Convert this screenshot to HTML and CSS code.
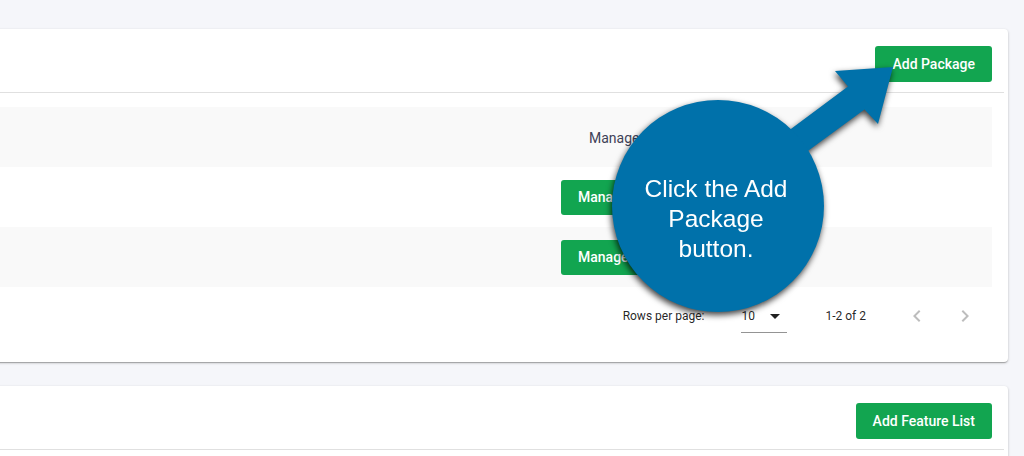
FILE: index.html
```html
<!DOCTYPE html>
<html lang="en">
<head>
<meta charset="utf-8">
<title>Packages</title>
<link rel="stylesheet" href="styles.css">
</head>
<body>
<main class="page">
  <section class="card">
    <div class="card-header">
      <button class="btn">Add Package</button>
    </div>
    <div class="divider"></div>
    <div class="table-wrap">
      <div class="row row-head">
        <div class="cell"></div>
        <div class="cell"><span class="head-label">Manage</span></div>
      </div>
      <div class="row">
        <div class="cell"></div>
        <div class="cell"><button class="btn btn-row">Manage Features</button></div>
      </div>
      <div class="row row-alt">
        <div class="cell"></div>
        <div class="cell"><button class="btn btn-row">Manage Features</button></div>
      </div>
    </div>
    <div class="pagination">
      <span class="rows-label">Rows per page:</span>
      <div class="select"><span>10</span><span class="caret"></span></div>
      <span class="range">1-2 of 2</span>
      <button class="icon-btn" aria-label="Previous page">
        <svg width="24" height="24" viewBox="0 0 24 24"><path d="M15.41 7.41 14 6l-6 6 6 6 1.41-1.41L10.83 12z" fill="#bdbdbd"/></svg>
      </button>
      <button class="icon-btn" aria-label="Next page">
        <svg width="24" height="24" viewBox="0 0 24 24"><path d="M10 6 8.59 7.41 13.17 12l-4.58 4.59L10 18l6-6z" fill="#bdbdbd"/></svg>
      </button>
    </div>
  </section>

  <section class="card">
    <div class="card-header">
      <button class="btn">Add Feature List</button>
    </div>
    <div class="divider"></div>
    <div class="card-body"></div>
  </section>
</main>

<div class="callout">
  <svg class="arrow" width="1024" height="456" viewBox="0 0 1024 456">
    <polygon points="893,67 835,71 848,86.5 760,152 760,186 864.5,109.5 878,124" fill="#0071aa"/>
  </svg>
  <div class="bubble">
    <span>Click the Add</span>
    <span>Package</span>
    <span>button.</span>
  </div>
</div>
</body>
</html>
```

FILE: styles.css
```css
html, body {
  margin: 0;
  padding: 0;
  overflow: hidden;
}

body {
  background: #f5f6fa;
  font-family: Roboto, "Liberation Sans", Arial, sans-serif;
  color: rgba(0, 0, 0, 0.87);
  position: relative;
  width: 1024px;
  height: 456px;
}

.page {
  padding: 29px 16px 0 0;
  margin-left: -10px;
}

.card {
  background: #ffffff;
  border-radius: 4px;
  box-shadow: 0 1px 3px rgba(0, 0, 0, 0.2), 0 1px 1px rgba(0, 0, 0, 0.14), 0 2px 1px -1px rgba(0, 0, 0, 0.12);
  margin-bottom: 24px;
}

.card-header {
  display: flex;
  justify-content: flex-end;
  padding: 17px 16px 10px;
}

.divider {
  height: 1px;
  background: #e0e0e0;
  margin-right: 4px;
}

.btn {
  height: 36px;
  padding: 0 17px;
  border: none;
  border-radius: 3px;
  background: #12a550;
  color: #ffffff;
  font-family: Roboto, "Liberation Sans", Arial, sans-serif;
  font-size: 14px;
  font-weight: 500;
  line-height: 36px;
  white-space: nowrap;
}

.table-wrap {
  padding: 14px 16px 0 0;
}

.row {
  display: grid;
  grid-template-columns: 1fr 431px;
  height: 60px;
  align-items: center;
}

.row-head,
.row-alt {
  background: #f9f9f9;
}

.head-label {
  margin-left: 28px;
  font-size: 14px;
  color: #3e4157;
}

.btn-row {
  height: 35px;
  line-height: 35px;
}

.pagination {
  display: flex;
  justify-content: flex-end;
  align-items: center;
  height: 58px;
  padding: 0 19px 17px 0;
  font-size: 12px;
}

.rows-label {
  margin-right: 37px;
}

.select {
  display: flex;
  align-items: center;
  justify-content: space-between;
  width: 46px;
  height: 31px;
  border-bottom: 1px solid #949494;
  padding-top: 1px;
  box-sizing: content-box;
}

.caret {
  width: 0;
  height: 0;
  border-left: 5px solid transparent;
  border-right: 5px solid transparent;
  border-top: 5px solid #212121;
  margin-right: 7px;
}

.range {
  margin-left: 38px;
  margin-right: 27px;
}

.icon-btn {
  width: 48px;
  height: 48px;
  border: none;
  background: transparent;
  padding: 0;
  display: flex;
  align-items: center;
  justify-content: center;
}

.card-body {
  height: 120px;
}

.callout {
  position: absolute;
  left: 0;
  top: 0;
  width: 1024px;
  height: 456px;
  pointer-events: none;
  filter: drop-shadow(-1px 3px 3px rgba(0, 0, 0, 0.75));
}

.arrow {
  position: absolute;
  left: 0;
  top: 0;
}

.bubble {
  position: absolute;
  left: 612px;
  top: 100px;
  width: 212px;
  height: 212px;
  box-sizing: border-box;
  padding: 74px 4px 0 0;
  border-radius: 50%;
  background: #0071aa;
  color: #ffffff;
  font-family: "Liberation Sans", Arial, sans-serif;
  font-size: 24.5px;
  line-height: 30px;
  display: flex;
  flex-direction: column;
  align-items: center;
}
```
